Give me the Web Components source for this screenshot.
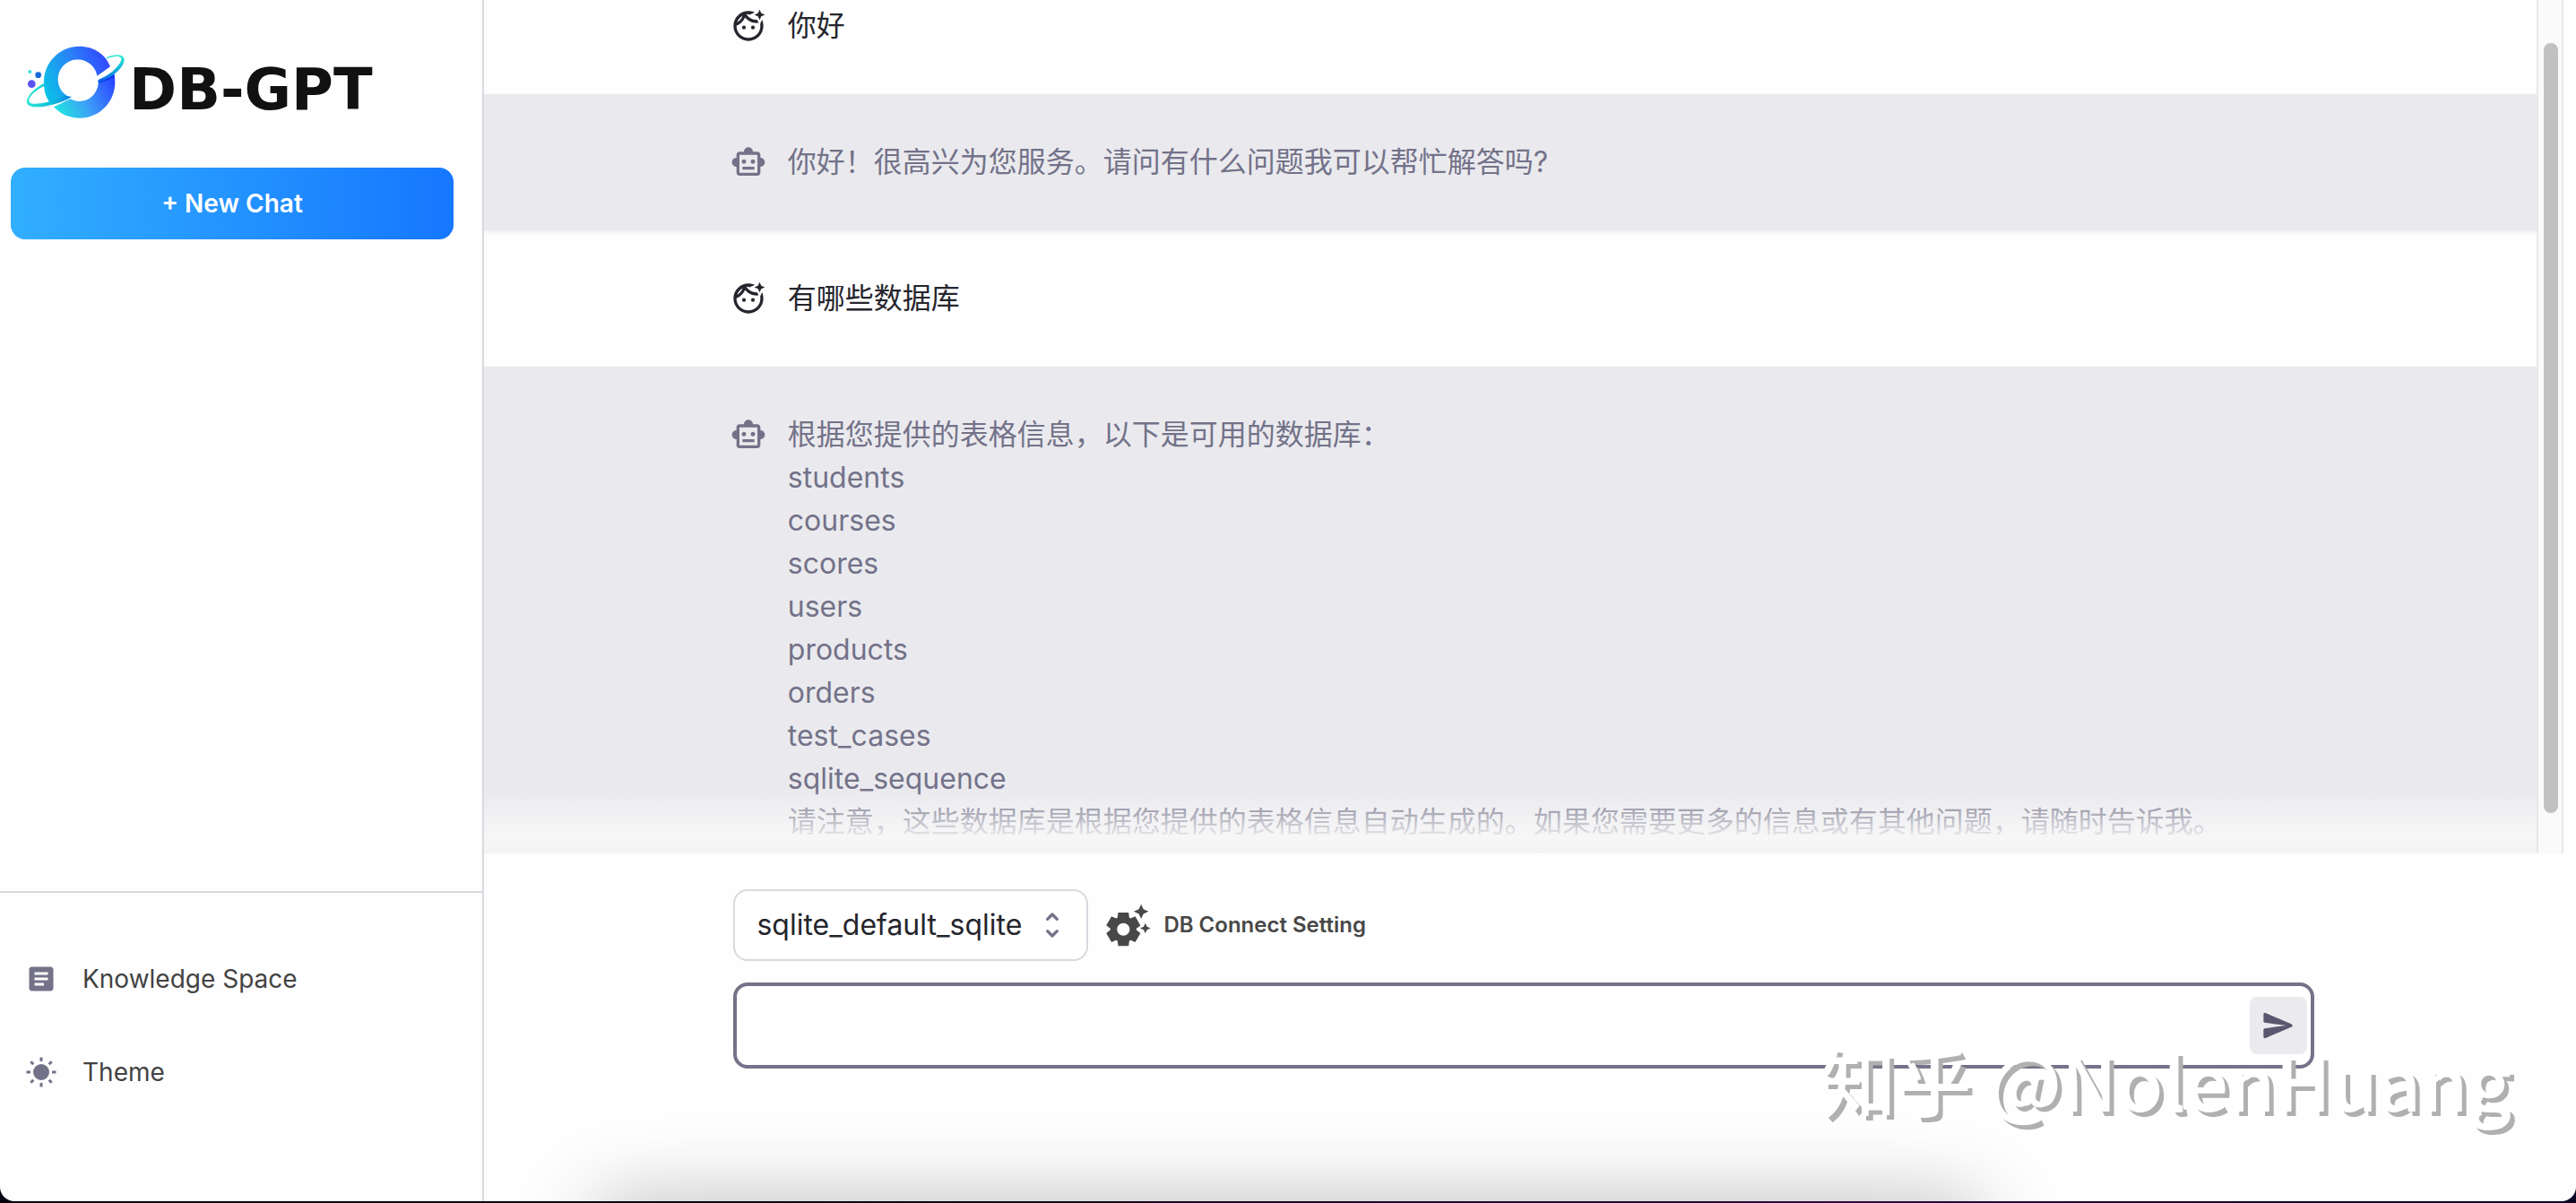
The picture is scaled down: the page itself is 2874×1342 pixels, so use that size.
<!DOCTYPE html>
<html lang="zh-CN">
<head>
<meta charset="UTF-8">
<meta name="viewport" content="width=device-width, initial-scale=1.0">
<title>DB-GPT</title>
<style>
  html, body {
    height: 100%;
    margin: 0;
  }
  body {
    background: linear-gradient(90deg, #05010f, #0c0418 40%, #2c0a3c 72%, #0d0526 90%);
    font-family: Inter, "Noto Sans CJK SC", sans-serif;
    overflow: hidden;
  }
</style>
</head>
<body>
<app-shell>
  <side-bar slot="side">
    <nav-item icon="article">Knowledge Space</nav-item>
    <nav-item icon="sun">Theme</nav-item>
  </side-bar>
  <chat-log>
    <chat-message role-name="user">你好</chat-message>
    <chat-message role-name="bot">你好！很高兴为您服务。请问有什么问题我可以帮忙解答吗?</chat-message>
    <chat-message role-name="user">有哪些数据库</chat-message>
    <chat-message role-name="bot">根据您提供的表格信息，以下是可用的数据库：<br>students<br>courses<br>scores<br>users<br>products<br>orders<br>test_cases<br>sqlite_sequence<br>请注意，这些数据库是根据您提供的表格信息自动生成的。如果您需要更多的信息或有其他问题，请随时告诉我。</chat-message>
  </chat-log>
  <prompt-form></prompt-form>
</app-shell>
<water-mark>知乎 @NolenHuang</water-mark>

<script>
const ICONS = {
  user: `<path fill-rule="evenodd" d="m20.77 8.58-.92 2.01c.09.46.15.93.15 1.41 0 4.41-3.59 8-8 8s-8-3.59-8-8c0-.05.01-.1 0-.14 2.6-.98 4.69-2.99 5.74-5.55C11.58 8.56 14.37 10 17.5 10c.45 0 .89-.04 1.33-.1l-.6-1.32-.88-1.93-1.93-.88-2.79-1.27 2.79-1.27.71-.32C14.87 2.33 13.47 2 12 2 6.48 2 2 6.48 2 12s4.48 10 10 10 10-4.48 10-10c0-1.47-.33-2.87-.9-4.13l-.33.71zM4.42 9.47c.63-1.89 1.95-3.47 3.66-4.44-.63 1.89-1.95 3.47-3.66 4.44zM10.66 4.12c.6-.1 1.2-.14 1.97.38l2.79 1.27 1.93.88.6 1.33C14.6 8 12.06 6.44 10.66 4.12z"/>
    <circle cx="9" cy="13" r="1.25"/><circle cx="15" cy="13" r="1.25"/>
    <path d="M20.6 5.6 19.5 8l-1.1-2.4L16 4.5l2.4-1.1L19.5 1l1.1 2.4L23 4.5z"/>`,
  bot: `<path d="M20 9V7c0-1.1-.9-2-2-2h-3c0-1.66-1.34-3-3-3S9 3.34 9 5H6c-1.1 0-2 .9-2 2v2c-1.66 0-3 1.34-3 3s1.34 3 3 3v4c0 1.1.9 2 2 2h12c1.1 0 2-.9 2-2v-4c1.66 0 3-1.34 3-3s-1.34-3-3-3zm-2 10H6V7h12v12zm-9-6c-.83 0-1.5-.67-1.5-1.5S8.17 10 9 10s1.5.67 1.5 1.5S9.83 13 9 13zm7.5-1.5c0 .83-.67 1.5-1.5 1.5s-1.5-.67-1.5-1.5.67-1.5 1.5-1.5 1.5.67 1.5 1.5zM8 15h8v2H8v-2z"/>`,
  settings: `<path d="M17.41 6.59 15 5.5l2.41-1.09L18.5 2l1.09 2.41L22 5.5l-2.41 1.09L18.5 9l-1.09-2.41zm3.87 6.13L20.5 11l-.78 1.72-1.72.78 1.72.78.78 1.72.78-1.72L23 13.5l-1.72-.78zm-5.04 1.65 1.94 1.47-2.5 4.33-2.24-.94c-.2.13-.42.26-.64.37l-.3 2.4h-5l-.3-2.41c-.22-.11-.43-.23-.64-.37l-2.24.94-2.5-4.33 1.94-1.47c-.01-.11-.01-.24-.01-.36s0-.25.01-.37l-1.94-1.47 2.5-4.33 2.24.94c.2-.13.42-.26.64-.37L7.5 6h5l.3 2.41c.22.11.43.23.64.37l2.24-.94 2.5 4.33-1.94 1.47c.01.12.01.24.01.37s0 .24-.01.36zM13 14c0-1.66-1.34-3-3-3s-3 1.34-3 3 1.34 3 3 3 3-1.34 3-3z"/>`,
  article: `<path d="M19 3H5c-1.1 0-2 .9-2 2v14c0 1.1.9 2 2 2h14c1.1 0 2-.9 2-2V5c0-1.1-.9-2-2-2zm-5 14H7v-2h7v2zm3-4H7v-2h10v2zm0-4H7V7h10v2z"/>`,
  sun: `<circle cx="12" cy="12" r="6"/>
    <path fill="none" stroke="currentColor" stroke-width="2" d="M12 1v3M12 20v3M1 12h3M20 12h3M4.2 4.2l2 2M17.8 17.8l2 2M4.2 19.8l2-2M17.8 6.2l2-2"/>`,
  send: `<path d="m3.4 20.4 17.45-7.48c.81-.35.81-1.49 0-1.84L3.4 3.6c-.66-.29-1.39.2-1.39.91L2 9.12c0 .5.37.93.87.99L17 12 2.87 13.88c-.5.07-.87.5-.87 1l.01 4.61c0 .71.73 1.2 1.39.91z"/>`,
  unfold: `<path fill="none" stroke="currentColor" stroke-width="2" stroke-linecap="round" stroke-linejoin="round" d="m8.8 8 3.2-3.2L15.200 8M8.800 16l3.200 3.200 3.200-3.200"/>`
};

function icon(name) {
  return `<svg viewBox="0 0 24 24" fill="currentColor" aria-hidden="true">${ICONS[name]}</svg>`;
}

class AppShell extends HTMLElement {
  constructor() {
    super();
    this.attachShadow({ mode: "open" });
  }

  connectedCallback() {
    this.shadowRoot.innerHTML = `
      <style>
        :host {
          display: flex;
          position: relative;
          height: calc(100vh - 2px);
          background: #fefefe;
          border-radius: 0 0 16px 16px;
          overflow: hidden;
        }
        main {
          flex: 1;
          min-width: 0;
          display: flex;
          flex-direction: column;
          margin-right: 14px;
        }
        /* shade of the dock under the window */
        .dock-shade {
          position: absolute;
          left: 23%;
          right: 23%;
          top: 100%;
          height: 80px;
          border-radius: 32px;
          box-shadow: 0 0 88px rgba(0, 0, 0, .27);
          pointer-events: none;
        }
      </style>
      <slot name="side"></slot>
      <main><slot></slot></main>
      <div class="dock-shade"></div>
    `;
  }
}

class AppLogo extends HTMLElement {
  constructor() {
    super();
    this.attachShadow({ mode: "open" });
  }

  connectedCallback() {
    this.shadowRoot.innerHTML = `
      <style>
        :host {
          display: flex;
          align-items: center;
          gap: 4px;
        }
        svg {
          flex: none;
          width: 112px;
          height: 88px;
        }
        span {
          color: #111;
          font: bold 64px/72px "DejaVu Sans", sans-serif;
          padding-top: 16px;
        }
      </style>
      <svg viewBox="26 24 336 264" aria-hidden="true">
        <defs>
          <linearGradient id="planet" gradientUnits="userSpaceOnUse" x1="90" y1="185" x2="325" y2="95">
            <stop offset="0" stop-color="#09c3e6"/>
            <stop offset=".5" stop-color="#2b80f8"/>
            <stop offset="1" stop-color="#3340ff"/>
          </linearGradient>
          <linearGradient id="south" gradientUnits="userSpaceOnUse" x1="130" y1="260" x2="325" y2="160">
            <stop offset="0" stop-color="#20e8e0"/>
            <stop offset=".5" stop-color="#3d9cf8"/>
            <stop offset="1" stop-color="#2a48ff"/>
          </linearGradient>
          <linearGradient id="tail" gradientUnits="userSpaceOnUse" x1="30" y1="200" x2="190" y2="210">
            <stop offset="0" stop-color="#30e8d0"/>
            <stop offset=".5" stop-color="#10c0dc"/>
            <stop offset="1" stop-color="#0a78e8"/>
          </linearGradient>
          <linearGradient id="tip" gradientUnits="userSpaceOnUse" x1="310" y1="66" x2="300" y2="150">
            <stop offset="0" stop-color="#30e8d0"/>
            <stop offset=".5" stop-color="#10b4dc"/>
            <stop offset="1" stop-color="#0a68e8"/>
          </linearGradient>
        </defs>
        <path fill="url(#planet)" d="M208 35C142 35 89 88 89 155c0 32 8 52 20 68l63-19a66 66 0 1 1 95-70l44-31C296 62 256 35 208 35z"/>
        <path fill="url(#south)" d="M122 238c22 24 52 37 86 37 67 0 119-54 119-120 0-12-1-22-4-31l-52 35c-3 35-30 60-63 60-12 0-22-3-31-8z"/>
        <path fill="#1238ee" d="M271 148l52-24c1 7 2 12 1 16l-52 19z"/>
        <path fill="url(#tail)" d="M90 158c-36 18-62 48-58 66 5 18 45 17 86 6 26-7 46-14 64-26l-20-4c-30 12-56 22-83 26-22 3-38 2-40-8-2-13 18-34 51-50z"/>
        <path fill="url(#tip)" d="M298 73c22-11 52-13 58-1 8 15-10 42-36 59-18 12-34 20-50 25l1-8c28-13 48-27 61-42 15-17 20-30 12-35-7-5-24-2-43 5z"/>
        <circle cx="42" cy="120" r="6" fill="#3ee0da"/>
        <circle cx="70" cy="131" r="10" fill="#1868dc"/>
        <circle cx="48" cy="161" r="13" fill="#5a50f4"/>
      </svg>
      <span>DB-GPT</span>
    `;
  }
}

class SideBar extends HTMLElement {
  constructor() {
    super();
    this.attachShadow({ mode: "open" });
  }

  connectedCallback() {
    this.shadowRoot.innerHTML = `
      <style>
        :host {
          display: flex;
          flex-direction: column;
          flex: none;
          box-sizing: border-box;
          width: 540px;
          border-right: 2px solid #d8d8df;
        }
        app-logo {
          padding: 48px 28px 51px;
        }
        button {
          margin: 0 32px 0 12px;
          height: 80px;
          border: 0;
          border-radius: 16px;
          background: linear-gradient(90deg, #31afff, #1677ff);
          color: #fff;
          font: 600 28px/40px Inter, sans-serif;
        }
        nav {
          margin-top: auto;
          border-top: 2px solid #d8d8df;
          padding: 44px 28px 92px;
        }
      </style>
      <app-logo></app-logo>
      <button type="button">+ New Chat</button>
      <nav><slot></slot></nav>
    `;
  }
}

class NavItem extends HTMLElement {
  constructor() {
    super();
    this.attachShadow({ mode: "open" });
  }

  connectedCallback() {
    this.shadowRoot.innerHTML = `
      <style>
        :host {
          display: block;
        }
        a {
          display: flex;
          align-items: center;
          gap: 28px;
          height: 104px;
          color: #434343;
          font-size: 28px;
          line-height: 40px;
          text-decoration: none;
        }
        svg {
          width: 36px;
          height: 36px;
          color: #737289;
        }
      </style>
      <a href="#">${icon(this.getAttribute("icon"))}<slot></slot></a>
    `;
  }
}

class ChatLog extends HTMLElement {
  constructor() {
    super();
    this.attachShadow({ mode: "open" });
  }

  connectedCallback() {
    this.shadowRoot.innerHTML = `
      <style>
        :host {
          display: flex;
          position: relative;
          flex: 1;
          min-height: 0;
        }
        .list {
          flex: 1;
          min-width: 0;
          overflow-y: auto;
          scrollbar-width: none;
        }
        .track {
          box-sizing: border-box;
          width: 30px;
          padding: 48px 4px 45px 6px;
          background: #fafafa;
          border: solid #e8e8e8;
          border-width: 0 2px;
        }
        .thumb {
          height: 100%;
          border-radius: 8px;
          background: #c1c1c1;
        }
        .fade {
          position: absolute;
          left: 0;
          right: 30px;
          bottom: 0;
          height: 72px;
          background: linear-gradient(rgba(254, 254, 254, 0), rgba(250, 250, 250, .5) 45%, rgba(248, 248, 248, .9) 75%, rgba(244, 244, 244, .95));
          pointer-events: none;
        }
      </style>
      <div class="list"><slot></slot></div>
      <div class="track"><div class="thumb"></div></div>
      <div class="fade"></div>
    `;
    requestAnimationFrame(() => {
      this.shadowRoot.querySelector(".list").scrollTop = 47;
    });
  }
}

class ChatMessage extends HTMLElement {
  constructor() {
    super();
    this.attachShadow({ mode: "open" });
  }

  connectedCallback() {
    this.shadowRoot.innerHTML = `
      <style>
        :host {
          display: block;
          padding: 52px 12%;
          color: #25252d;
          font-size: 32px;
          line-height: 48px;
        }
        :host([role-name="bot"]) {
          position: relative;
          background: #eaeaee;
          color: #737289;
          box-shadow: 0 2px 6px rgba(0, 0, 0, .08);
        }
        .row {
          display: flex;
          gap: 24px;
        }
        svg {
          flex: none;
          width: 40px;
          height: 40px;
          padding-top: 4px;
        }
      </style>
      <div class="row">${icon(this.getAttribute("role-name"))}<div><slot></slot></div></div>
    `;
  }
}

class PromptForm extends HTMLElement {
  constructor() {
    super();
    this.attachShadow({ mode: "open" });
  }

  connectedCallback() {
    this.shadowRoot.innerHTML = `
      <style>
        :host {
          display: block;
          padding: 40px 12% 148px;
        }
        form, .tools, .setting, .prompt {
          display: flex;
        }
        form {
          flex-direction: column;
          gap: 24px;
        }
        .tools {
          align-items: center;
          gap: 16px;
        }
        .picker {
          display: grid;
          align-items: center;
        }
        .picker > * {
          grid-area: 1 / 1;
        }
        select {
          appearance: none;
          height: 80px;
          padding: 0 72px 0 24px;
          border: 2px solid #d8d8df;
          border-radius: 16px;
          background: #fff;
          color: #25252d;
          font: 32px/48px Inter, sans-serif;
        }
        .picker svg {
          justify-self: end;
          width: 40px;
          height: 40px;
          margin-right: 20px;
          color: #737289;
          pointer-events: none;
        }
        .setting {
          align-items: center;
          gap: 12px;
          padding: 0;
          border: 0;
          background: none;
          color: #484848;
          font: 600 24px/36px Inter, sans-serif;
        }
        .setting svg {
          width: 56px;
          height: 56px;
        }
        .prompt {
          align-items: center;
          box-sizing: border-box;
          height: 96px;
          padding-right: 4px;
          border: 4px solid #757389;
          border-radius: 16px;
          background: #fff;
        }
        input {
          flex: 1;
          min-width: 0;
          align-self: stretch;
          padding: 0 24px;
          border: 0;
          outline: 0;
          background: none;
          font: 32px/48px Inter, sans-serif;
        }
        .send {
          display: grid;
          place-items: center;
          width: 64px;
          height: 64px;
          padding: 0;
          border: 0;
          border-radius: 8px;
          background: #ebebef;
          color: #5a586f;
        }
        .send svg {
          width: 40px;
          height: 40px;
        }
      </style>
      <form>
        <div class="tools">
          <div class="picker">
            <select aria-label="Database"><option>sqlite_default_sqlite</option></select>
            ${icon("unfold")}
          </div>
          <button class="setting" type="button">${icon("settings")}DB Connect Setting</button>
        </div>
        <div class="prompt">
          <input type="text" aria-label="Message">
          <button class="send" type="button" aria-label="Send">${icon("send")}</button>
        </div>
      </form>
    `;
  }
}

class WaterMark extends HTMLElement {
  constructor() {
    super();
    this.attachShadow({ mode: "open" });
  }

  connectedCallback() {
    this.shadowRoot.innerHTML = `
      <style>
        :host {
          position: absolute;
          right: 72px;
          bottom: 78px;
          color: #fff;
          font: 500 84px/120px "Noto Sans CJK SC", sans-serif;
          text-shadow: 5px 5px 0 #b0b0b0;
          white-space: nowrap;
          pointer-events: none;
        }
      </style>
      <slot></slot>
    `;
  }
}

customElements.define("app-shell", AppShell);
customElements.define("app-logo", AppLogo);
customElements.define("side-bar", SideBar);
customElements.define("nav-item", NavItem);
customElements.define("chat-log", ChatLog);
customElements.define("chat-message", ChatMessage);
customElements.define("prompt-form", PromptForm);
customElements.define("water-mark", WaterMark);
</script>
</body>
</html>
